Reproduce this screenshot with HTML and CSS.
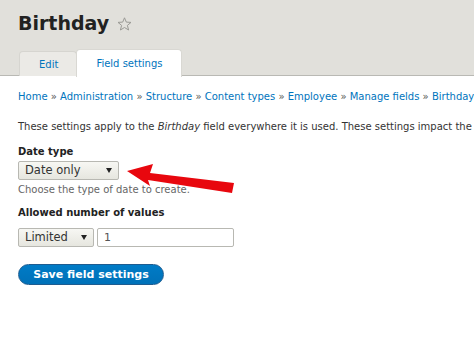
FILE: index.html
```html
<!DOCTYPE html>
<html lang="en">
<head>
    <meta charset="UTF-8">
    <title>Birthday | Field settings</title>
    <link rel="stylesheet" href="styles.css">
</head>
<body>

<div class="page-header">
    <h1>Birthday <span class="star">
        <svg width="15" height="14" viewBox="0 0 15 14"><path d="M7.5 0.8 L9.3 5.1 L14 5.4 L10.4 8.4 L11.6 13 L7.5 10.5 L3.4 13 L4.6 8.4 L1 5.4 L5.7 5.1 Z" fill="none" stroke="#9a9a95" stroke-width="1"/></svg>
    </span></h1>
    <ul class="tabs">
        <li><a href="#">Edit</a></li>
        <li class="active"><a href="#">Field settings</a></li>
    </ul>
</div>

<div class="content">
    <div class="breadcrumb">
        <a href="#">Home</a> » <a href="#">Administration</a> » <a href="#">Structure</a> » <a href="#">Content types</a> » <a href="#">Employee</a> » <a href="#">Manage fields</a> » <a href="#">Birthday</a>
    </div>

    <p class="intro">These settings apply to the <em>Birthday</em> field everywhere it is used. These settings impact the</p>

    <form>
        <div class="form-item">
            <label>Date type</label>
            <div class="select date-type">Date only <span class="caret"></span></div>
            <div class="description">Choose the type of date to create.</div>
        </div>

        <div class="form-item">
            <label>Allowed number of values</label>
            <div class="inline">
                <div class="select limited">Limited <span class="caret"></span></div>
                <div class="text-input">1</div>
            </div>
        </div>

        <button type="button" class="button-primary">Save field settings</button>
    </form>
</div>

<!-- annotation arrow pointing at the date type select -->
<svg class="arrow" width="474" height="343" viewBox="0 0 474 343">
    <polygon points="127,171 153,164 150,173 234,183 232,193 148,180 150,186" fill="#e8070e"/>
</svg>

</body>
</html>
```

FILE: styles.css
```css
body {
    margin: 0;
    font-family: "DejaVu Sans", sans-serif;
    color: #333;
    background: #fff;
    overflow: hidden;
    position: relative;
    height: 343px;
}
a {
    color: #0074bd;
    text-decoration: none;
}
.page-header {
    height: 75px;
    background: #e1e0db;
    border-bottom: 1px solid #b9b9b4;
    padding: 0 18px;
}
.page-header h1 {
    margin: 0;
    padding-top: 12px;
    font-size: 19px;
    line-height: 22px;
    font-weight: bold;
    color: #222;
    display: flex;
    align-items: center;
}
.star {
    display: inline-flex;
    margin-left: 8px;
    margin-top: 1px;
}
.tabs {
    list-style: none;
    margin: 16px 0 0 1px;
    padding: 0;
    display: flex;
    align-items: flex-end;
    height: 26px;
}
.tabs li {
    height: 24px;
    background: #ebeae6;
    border: 1px solid #d6d5d0;
    border-bottom: none;
    border-radius: 4px 4px 0 0;
    display: flex;
    align-items: center;
}
.tabs li a {
    font-size: 10px;
    padding: 0 18px 0 19px;
}
.tabs li.active {
    height: 27px;
    background: #fff;
    border-color: #d9d8d3;
    margin-bottom: -1px;
    margin-left: -1px;
}
.content {
    padding: 0 18px;
    white-space: nowrap;
}
.breadcrumb {
    margin-top: 14px;
    font-size: 10px;
    line-height: 14px;
    color: #555;
}
.intro {
    margin: 16px 0 0;
    font-size: 10px;
    line-height: 14px;
    color: #333;
}
.form-item {
    margin-top: 11px;
}
.form-item label {
    display: block;
    font-size: 10px;
    font-weight: bold;
    line-height: 14px;
    color: #222;
}
.select {
    box-sizing: border-box;
    height: 19px;
    margin-top: 2px;
    padding: 0 6px;
    border: 1px solid #b8b8b2;
    border-radius: 2px;
    background: linear-gradient(#f7f7f3, #e6e6df);
    font-size: 11.5px;
    line-height: 17px;
    color: #333;
    display: flex;
    align-items: center;
    justify-content: space-between;
}
.caret {
    width: 0;
    height: 0;
    border-left: 3px solid transparent;
    border-right: 3px solid transparent;
    border-top: 5px solid #222;
}
.date-type {
    width: 101px;
}
.description {
    margin-top: 3px;
    font-size: 10px;
    line-height: 14px;
    color: #666;
}
.form-item + .form-item {
    margin-top: 9px;
}
.inline {
    display: flex;
    gap: 3px;
    margin-top: 8px;
}
.inline .select {
    margin-top: 0;
}
.limited {
    width: 76px;
}
.text-input {
    box-sizing: border-box;
    width: 137px;
    height: 19px;
    padding: 0 6px;
    border: 1px solid #b8b8b2;
    border-radius: 2px;
    font-size: 11px;
    line-height: 17px;
    color: #555;
}
.button-primary {
    margin-top: 17px;
    width: 146px;
    height: 21px;
    padding: 0;
    border: 1px solid #1e5c90;
    border-radius: 11px;
    background: linear-gradient(#007bc6, #0071b8);
    color: #fff;
    font-family: "DejaVu Sans", sans-serif;
    font-size: 11px;
    font-weight: bold;
}
.arrow {
    position: absolute;
    left: 0;
    top: 0;
    pointer-events: none;
}
```
